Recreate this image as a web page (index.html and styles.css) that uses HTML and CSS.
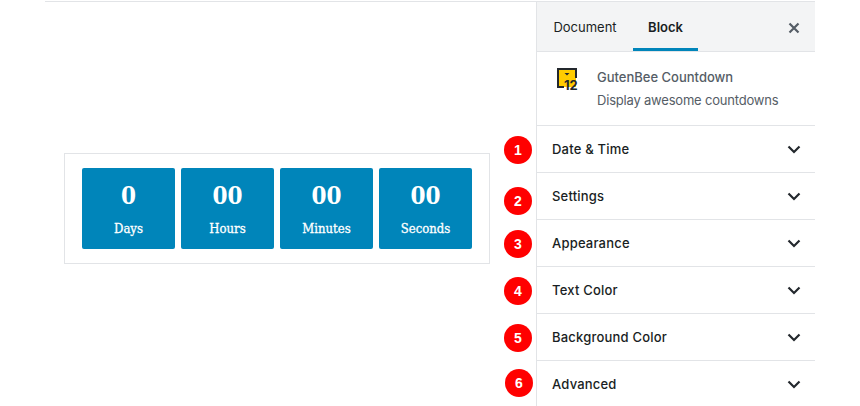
FILE: index.html
```html
<!DOCTYPE html>
<html lang="en">
<head>
    <meta charset="UTF-8">
    <meta name="viewport" content="width=device-width, initial-scale=1.0">
    <title>GutenBee Countdown</title>
    <link rel="stylesheet" href="styles.css">
</head>
<body>
    <div class="editor">
        <main class="canvas">
            <div class="countdown">
                <div class="unit"><span class="value">0</span><span class="label">Days</span></div>
                <div class="unit"><span class="value">00</span><span class="label">Hours</span></div>
                <div class="unit"><span class="value">00</span><span class="label">Minutes</span></div>
                <div class="unit"><span class="value">00</span><span class="label">Seconds</span></div>
            </div>
        </main>
        <aside class="sidebar">
            <div class="tabs">
                <button class="tab">Document</button>
                <button class="tab active">Block</button>
                <button class="close" aria-label="Close">
                    <svg width="12" height="12" viewBox="0 0 12 12"><path d="M1.5 1.5l9 9M10.5 1.5l-9 9" stroke="#555d66" stroke-width="2.2" fill="none"/></svg>
                </button>
            </div>
            <div class="block-info">
                <svg class="block-icon" width="20" height="20" viewBox="0 0 20 20">
                    <rect x="1" y="1" width="18" height="18" fill="#ffcc00"/>
                    <path d="M7 19H1V1h18v9" stroke="#23282d" stroke-width="2" fill="none"/>
                    <path d="M7.500 5h5l-2.500 2.500z" fill="#23282d"/>
                </svg>
                <span class="icon-num">12</span>
                <div class="block-text">
                    <h2>GutenBee Countdown</h2>
                    <p>Display awesome countdowns</p>
                </div>
            </div>
            <div class="panel"><span class="badge">1</span><span class="panel-title">Date &amp; Time</span><svg class="chevron" width="14" height="9" viewBox="0 0 14 9"><path d="M1.500 1.500L7 7l5.500-5.500" stroke="#23282d" stroke-width="2.200" fill="none"/></svg></div>
            <div class="panel"><span class="badge low">2</span><span class="panel-title">Settings</span><svg class="chevron" width="14" height="9" viewBox="0 0 14 9"><path d="M1.500 1.500L7 7l5.500-5.500" stroke="#23282d" stroke-width="2.200" fill="none"/></svg></div>
            <div class="panel"><span class="badge">3</span><span class="panel-title">Appearance</span><svg class="chevron" width="14" height="9" viewBox="0 0 14 9"><path d="M1.500 1.500L7 7l5.500-5.500" stroke="#23282d" stroke-width="2.200" fill="none"/></svg></div>
            <div class="panel"><span class="badge">4</span><span class="panel-title">Text Color</span><svg class="chevron" width="14" height="9" viewBox="0 0 14 9"><path d="M1.500 1.500L7 7l5.500-5.500" stroke="#23282d" stroke-width="2.200" fill="none"/></svg></div>
            <div class="panel"><span class="badge">5</span><span class="panel-title">Background Color</span><svg class="chevron" width="14" height="9" viewBox="0 0 14 9"><path d="M1.500 1.500L7 7l5.500-5.500" stroke="#23282d" stroke-width="2.200" fill="none"/></svg></div>
            <div class="panel"><span class="badge last">6</span><span class="panel-title">Advanced</span><svg class="chevron" width="14" height="9" viewBox="0 0 14 9"><path d="M1.500 1.500L7 7l5.500-5.500" stroke="#23282d" stroke-width="2.200" fill="none"/></svg></div>
        </aside>
    </div>
</body>
</html>
```

FILE: styles.css
```css
html, body {
    height: 100%;
}
body {
    margin: 0;
    background-color: #fff;
    font-family: Inter, "Liberation Sans", sans-serif;
    overflow: hidden;
}
.editor {
    display: flex;
    width: 770px;
    height: 405px;
    margin: 1px 0 0 45px;
    border-top: 1px solid #e2e4e7;
}
.canvas {
    flex: 1;
    padding: 151px 0 0 19px;
}
.countdown {
    display: flex;
    gap: 6px;
    box-sizing: border-box;
    width: 426px;
    height: 111px;
    padding: 14px 17px;
    border: 1px solid #e2e4e7;
}
.unit {
    display: flex;
    flex-direction: column;
    align-items: center;
    width: 93px;
    height: 81px;
    background-color: #0085ba;
    border-radius: 2px;
    color: #fff;
    font-family: "DejaVu Serif", "Liberation Serif", serif;
    font-stretch: condensed;
}
.value {
    margin-top: 12px;
    font-size: 24px;
    line-height: 32px;
    font-weight: 700;
}
.label {
    margin-top: 7px;
    font-size: 13px;
    line-height: 20px;
    -webkit-text-stroke: 0.3px #fff;
}
.sidebar {
    box-sizing: border-box;
    width: 279px;
    border-left: 1px solid #e2e4e7;
}
.tabs {
    display: flex;
    align-items: stretch;
    height: 49px;
    background-color: #f3f4f5;
    border-bottom: 1px solid #e2e4e7;
}
.tab {
    width: 96px;
    padding: 3px 0 0;
    border: none;
    border-bottom: 3px solid transparent;
    background: none;
    color: #191e23;
    font-family: inherit;
    font-size: 13px;
}
.tab.active {
    width: 65px;
    border-bottom-color: #0085ba;
    font-weight: 600;
}
.close {
    display: flex;
    align-items: center;
    justify-content: center;
    width: 40px;
    margin-left: auto;
    margin-right: 1px;
    padding: 2px 0 0;
    border: none;
    background: none;
}
.block-info {
    position: relative;
    display: flex;
    height: 74px;
    box-sizing: border-box;
    padding: 17px 0 0 60px;
    border-bottom: 1px solid #e2e4e7;
}
.block-icon {
    position: absolute;
    left: 20px;
    top: 16px;
}
.icon-num {
    position: absolute;
    left: 26px;
    top: 26px;
    padding: 0 1px;
    color: #23282d;
    font-size: 13px;
    line-height: 14px;
    font-weight: 700;
}
.block-text h2 {
    margin: 0 0 6px;
    color: #555d66;
    font-size: 13px;
    line-height: 17px;
    font-weight: 500;
}
.block-text p {
    margin: 0;
    color: #555d66;
    font-size: 13px;
    line-height: 17px;
    letter-spacing: -0.2px;
}
.panel {
    position: relative;
    display: flex;
    align-items: center;
    justify-content: space-between;
    box-sizing: border-box;
    height: 47px;
    padding: 0 14px 0 15px;
    border-bottom: 1px solid #e2e4e7;
}
.panel:last-child {
    border-bottom: 1px solid transparent;
}
.panel-title {
    color: #191e23;
    font-size: 13px;
    font-weight: 500;
    letter-spacing: 0.2px;
}
.badge {
    position: absolute;
    left: -33px;
    top: 10px;
    width: 28px;
    height: 28px;
    border-radius: 50%;
    background-color: #f00;
    color: #fff;
    font-family: "Liberation Sans", sans-serif;
    font-size: 14px;
    font-weight: 700;
    line-height: 28px;
    text-align: center;
}
.badge.low {
    top: 14px;
}
.badge.last {
    left: -32px;
    top: 8px;
}
```
